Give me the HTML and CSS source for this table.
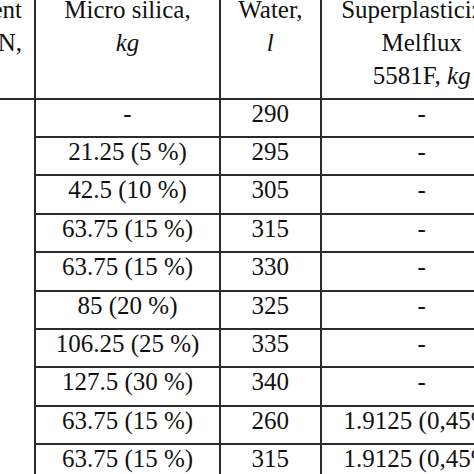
FILE: index.html
```html
<!DOCTYPE html>
<html lang="en">
<head>
<meta charset="utf-8">
<title>Mix composition</title>
<link rel="stylesheet" href="styles.css">
</head>
<body>
<div class="frame">
  <div class="table">
    <div class="cell head first"><span>Cement</span><span>CEM I 42.5 N,</span></div>
    <div class="cell head"><span>Micro silica,</span><span><i>kg</i></span></div>
    <div class="cell head"><span>Water,</span><span><i>l</i></span></div>
    <div class="cell head"><span>Superplasticizer</span><span>Melflux</span><span>5581F, <i>kg</i></span></div>

    <div class="cell span-col"></div>

    <div class="cell">-</div><div class="cell">290</div><div class="cell">-</div>
    <div class="cell">21.25 (5 %)</div><div class="cell">295</div><div class="cell">-</div>
    <div class="cell">42.5 (10 %)</div><div class="cell">305</div><div class="cell">-</div>
    <div class="cell">63.75 (15 %)</div><div class="cell">315</div><div class="cell">-</div>
    <div class="cell">63.75 (15 %)</div><div class="cell">330</div><div class="cell">-</div>
    <div class="cell">85 (20 %)</div><div class="cell">325</div><div class="cell">-</div>
    <div class="cell">106.25 (25 %)</div><div class="cell">335</div><div class="cell">-</div>
    <div class="cell">127.5 (30 %)</div><div class="cell">340</div><div class="cell">-</div>
    <div class="cell">63.75 (15 %)</div><div class="cell">260</div><div class="cell">1.9125 (0,45%)</div>
    <div class="cell">63.75 (15 %)</div><div class="cell">315</div><div class="cell">1.9125 (0,45%)</div>
  </div>
</div>
</body>
</html>
```
FILE: styles.css
```css
html, body {
  margin: 0;
  padding: 0;
  background: #ffffff;
}

.frame {
  width: 474px;
  height: 474px;
  overflow: hidden;
  background: #ffffff;
}

.table {
  display: grid;
  grid-template-columns: 101px 185px 100.7px 202px;
  grid-template-rows: 119.7px repeat(10, 38.4px);
  margin-left: -65px;
  margin-top: -20px;
  font-family: "Liberation Serif", "Times New Roman", serif;
  font-size: 25px;
  color: #111111;
  white-space: nowrap;
}

.cell {
  box-sizing: border-box;
  border-right: 2px solid #2b2b2b;
  border-bottom: 2px solid #2b2b2b;
  text-align: center;
  line-height: 28px;
  overflow: visible;
}

.head {
  display: flex;
  flex-direction: column;
  align-items: center;
  padding-top: 13px;
  line-height: 33px;
}

.head.first {
  align-items: flex-end;
  padding-right: 12px;
}

.head i {
  font-style: italic;
}

.span-col {
  grid-column: 1;
  grid-row: 2 / span 10;
  border-bottom: none;
}
```
